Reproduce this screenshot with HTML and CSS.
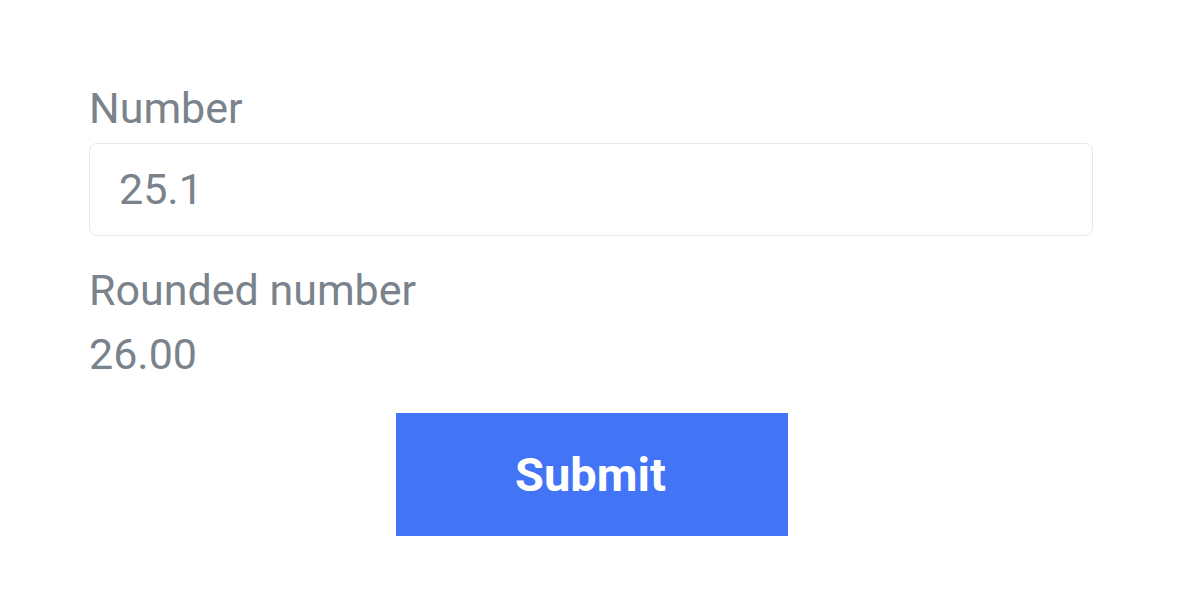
FILE: index.html
```html
<!DOCTYPE html>
<html lang="en">
<head>
<meta charset="utf-8">
<title>Rounded number</title>
<link rel="stylesheet" href="styles.css">
</head>
<body>
<form class="form">
  <label class="label" for="num">Number</label>
  <input class="input" id="num" type="text" value="25.1">
  <div class="label result-label">Rounded number</div>
  <div class="value">26.00</div>
  <div class="actions">
    <button class="submit" type="button">Submit</button>
  </div>
</form>
</body>
</html>
```
FILE: styles.css
```css
html, body {
  margin: 0;
  padding: 0;
  background: #ffffff;
}

body {
  font-family: Roboto, "Liberation Sans", sans-serif;
  color: #7a828b;
}

.form {
  width: 1004px;
  margin-left: 89px;
  padding-top: 76px;
  display: flex;
  flex-direction: column;
}

.label,
.value {
  display: block;
  font-size: 43px;
  line-height: 64.5px;
  color: #7a828b;
}

.input {
  box-sizing: border-box;
  width: 1004px;
  height: 93px;
  margin-top: 2px;
  padding: 0 29px;
  border: 1px solid #e6e8ea;
  border-radius: 8px;
  font-family: Roboto, "Liberation Sans", sans-serif;
  font-size: 43px;
  color: #7a828b;
  background: #ffffff;
  outline: none;
}

.result-label {
  margin-top: 22px;
}

.actions {
  display: flex;
  justify-content: center;
  margin-top: 26px;
}

.submit {
  width: 392px;
  height: 123px;
  border: none;
  border-radius: 0;
  background: #4374f6;
  color: #ffffff;
  font-family: Roboto, "Liberation Sans", sans-serif;
  font-weight: 700;
  font-size: 47px;
  padding: 0 3px 0 0;
  margin-left: 2px;
  cursor: pointer;
}
```
